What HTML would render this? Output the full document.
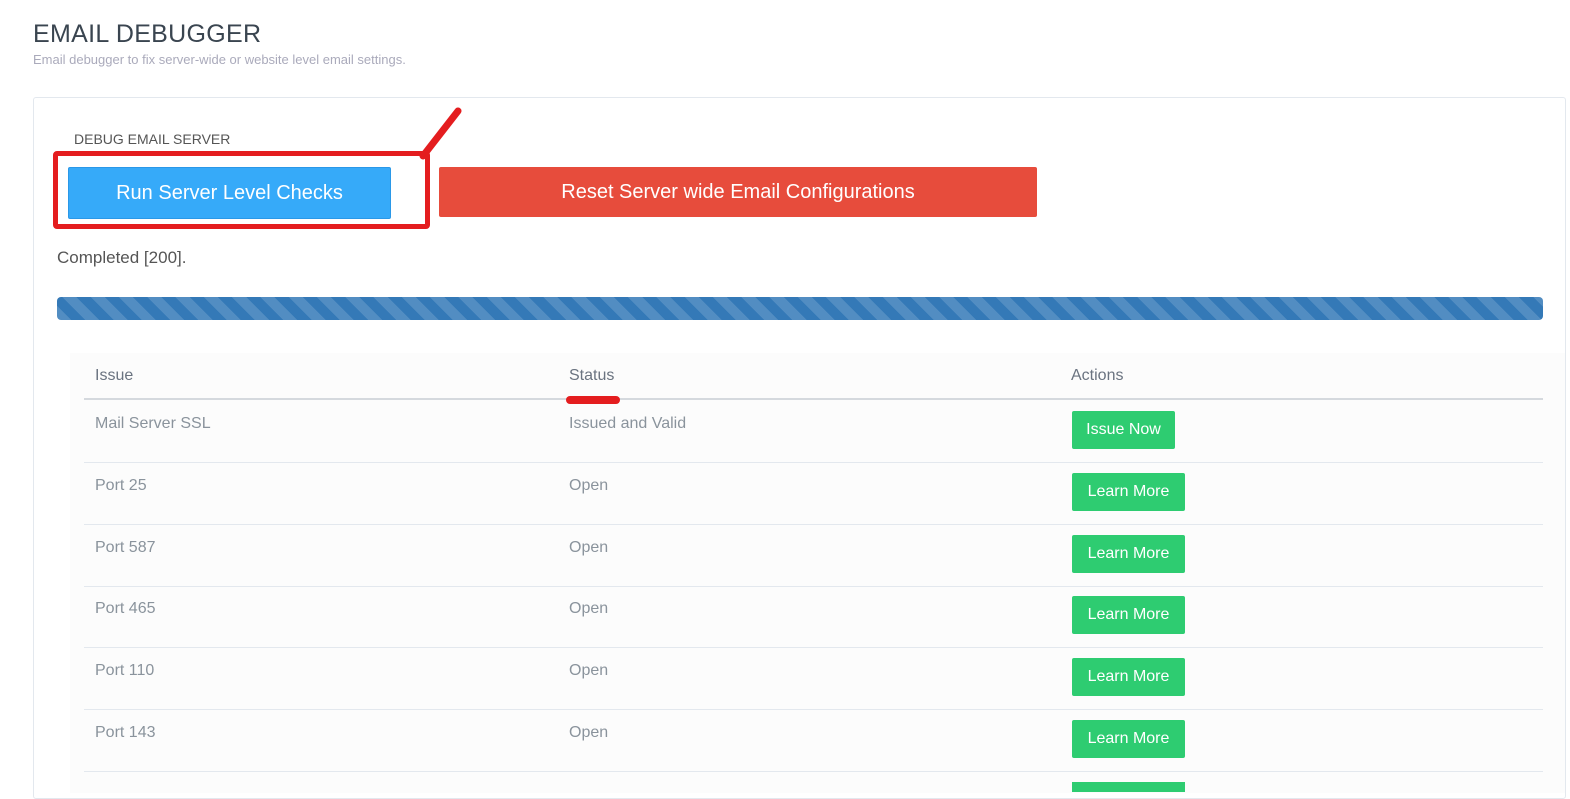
<!DOCTYPE html><html><head><style>
body{margin:0;background:#fff;font-family:"Liberation Sans",sans-serif;width:1570px;height:786px;overflow:hidden;position:relative}
.a{position:absolute}
.row{position:absolute;left:84px;width:1459px;height:62px;border-bottom:1px solid #e3e8ee}
.row span{position:absolute;top:15px;font-size:16px;color:#8a939c}
.btn{position:absolute;left:988px;top:11px;height:38px;background:#2ecc71;color:#fff;font-size:16px;line-height:38px;text-align:center;border-radius:2px}
</style></head><body>
<div class="a" style="left:33px;top:20px;font-size:25px;color:#3a4550;letter-spacing:0.3px">EMAIL DEBUGGER</div>
<div class="a" style="left:33px;top:52px;font-size:13px;color:#aab">Email debugger to fix server-wide or website level email settings.</div>
<div class="a" style="left:33px;top:97px;width:1531px;height:700px;border:1px solid #e3e8ee;border-radius:3px"></div>
<div class="a" style="left:74px;top:131px;font-size:14px;color:#555">DEBUG EMAIL SERVER</div>
<div class="a" style="left:68px;top:167px;width:321px;height:50px;background:#36aaf9;border:1px solid #2a98e8;border-radius:2px;color:#fff;font-size:20px;line-height:50px;text-align:center">Run Server Level Checks</div>
<div class="a" style="left:439px;top:167px;width:598px;height:50px;background:#e74c3c;border-radius:2px;color:#fff;font-size:20px;line-height:50px;text-align:center">Reset Server wide Email Configurations</div>
<div class="a" style="left:53px;top:151px;width:367px;height:68px;border:5px solid #e41d1f;border-radius:4px"></div>
<svg class="a" style="left:410px;top:100px" width="60" height="65"><line x1="13" y1="56" x2="48" y2="11" stroke="#e41d1f" stroke-width="7" stroke-linecap="round"/></svg>
<div class="a" style="left:57px;top:248px;font-size:17px;color:#555">Completed [200].</div>
<div class="a" style="left:57px;top:297px;width:1486px;height:23px;border-radius:4px;background:#3479b7 repeating-linear-gradient(45deg,rgba(255,255,255,.15) 0 10px,transparent 10px 20px)"></div>
<div class="a" style="left:70px;top:353px;width:1495px;height:440px;background:#fcfcfc"></div>
<div class="a" style="left:84px;top:353px;width:1459px;height:45px;border-bottom:2px solid #d5d9de">
<span class="a" style="left:11px;top:14px;font-size:16px;color:#6a7380">Issue</span>
<span class="a" style="left:485px;top:14px;font-size:16px;color:#6a7380">Status</span>
<span class="a" style="left:987px;top:14px;font-size:16px;color:#6a7380">Actions</span></div>
<div class="a" style="left:566px;top:396px;width:54px;height:8px;background:#e41d1f;border-radius:4px"></div>
<div class="row" style="top:400px"><span style="left:11px">Mail Server SSL</span><span style="left:485px">Issued and Valid</span><div class="btn" style="width:103px">Issue Now</div></div>
<div class="row" style="top:462px"><span style="left:11px">Port 25</span><span style="left:485px">Open</span><div class="btn" style="width:113px">Learn More</div></div>
<div class="row" style="top:524px"><span style="left:11px">Port 587</span><span style="left:485px">Open</span><div class="btn" style="width:113px">Learn More</div></div>
<div class="row" style="top:585px"><span style="left:11px">Port 465</span><span style="left:485px">Open</span><div class="btn" style="width:113px">Learn More</div></div>
<div class="row" style="top:647px"><span style="left:11px">Port 110</span><span style="left:485px">Open</span><div class="btn" style="width:113px">Learn More</div></div>
<div class="row" style="top:709px"><span style="left:11px">Port 143</span><span style="left:485px">Open</span><div class="btn" style="width:113px">Learn More</div></div>
<div class="a" style="left:1072px;top:782px;width:113px;height:10px;background:#2ecc71"></div>
</body></html>
